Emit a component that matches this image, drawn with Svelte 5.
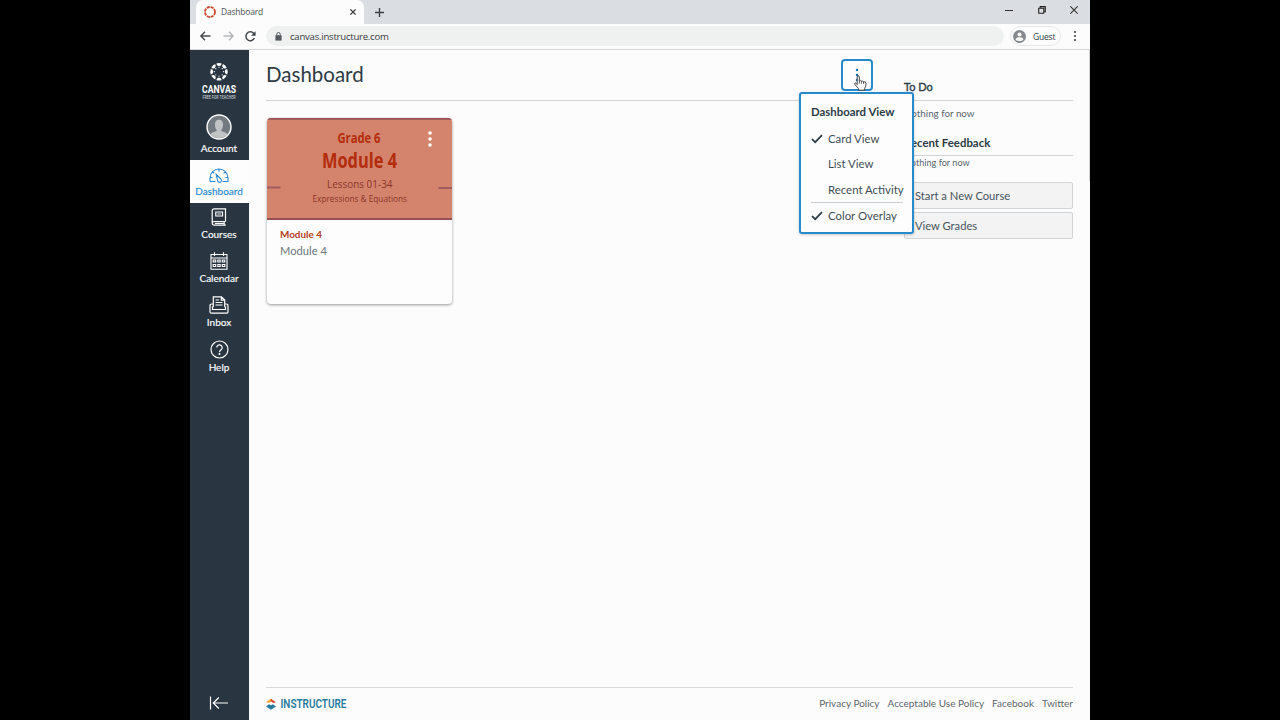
<script>
  const nav = [
    { id: 'account', label: 'Account', height: 50 },
    { id: 'dashboard', label: 'Dashboard', height: 43, active: true },
    { id: 'courses', label: 'Courses', height: 43 },
    { id: 'calendar', label: 'Calendar', height: 44 },
    { id: 'inbox', label: 'Inbox', height: 44 },
    { id: 'help', label: 'Help', height: 45 }
  ];
  const views = [
    { label: 'Card View', checked: true },
    { label: 'List View', checked: false },
    { label: 'Recent Activity', checked: false }
  ];
  const links = ['Privacy Policy', 'Acceptable Use Policy', 'Facebook', 'Twitter'];
  const segments = [0, 45, 90, 135, 180, 225, 270, 315];
</script>

{#snippet check(on)}
  <span class="check">
    {#if on}
      <svg width="12" height="10" viewBox="0 0 12 10"><path d="M1 5.2 4.2 8.2 11 1.2" fill="none" stroke="#2d3b45" stroke-width="1.7" /></svg>
    {/if}
  </span>
{/snippet}

<div class="screen">
  <div class="window">
    <div class="tabs">
      <div class="tab">
        <svg class="fav" width="12" height="12" viewBox="0 0 12 12"><circle cx="6" cy="6" r="5" fill="none" stroke="#c8442f" stroke-width="1.8" stroke-dasharray="3.1 .83" /></svg>
        <span class="tabname">Dashboard</span>
        <svg width="6" height="6" viewBox="0 0 6 6"><path d="M.4.4 5.6 5.6M5.6.4.4 5.6" stroke="#333" stroke-width="1.3" /></svg>
      </div>
      <svg class="plus" width="9" height="9" viewBox="0 0 9 9"><path d="M4.5 0V9M0 4.5H9" stroke="#3c4043" stroke-width="1.4" /></svg>
      <div class="controls">
        <svg width="8" height="9" viewBox="0 0 8 9"><path d="M0 4.500H8" stroke="#333" /></svg>
        <svg width="8" height="8" viewBox="0 0 8 8"><path d="M.7 2.2H5.8V7.3H.7ZM2.2 2V.6H7.3V5.8H6" fill="none" stroke="#222" stroke-width="1.1" /></svg>
        <svg width="8" height="8" viewBox="0 0 8 8"><path d="M.4.4 7.6 7.6M7.6.4.4 7.6" stroke="#333" stroke-width="1.1" /></svg>
      </div>
    </div>
    <div class="toolbar">
      <svg width="11" height="10" viewBox="0 0 11 10"><path d="M10.5 5H1M5 .8.9 5 5 9.2" fill="none" stroke="#44484c" stroke-width="1.4" /></svg>
      <svg width="11" height="10" viewBox="0 0 11 10"><path d="M.5 5H10M6 .8 10.1 5 6 9.2" fill="none" stroke="#b1b4b7" stroke-width="1.3" /></svg>
      <svg width="11" height="11" viewBox="0 0 11 11"><path d="M9.4 7A4.4 4.4 0 1 1 8.6 2.3L9.6 3.5" fill="none" stroke="#44484c" stroke-width="1.5" /><path d="M10.6.2V4.8H6Z" fill="#44484c" /></svg>
      <div class="address">
        <svg width="7" height="9" viewBox="0 0 7 9"><path d="M.4 3.2H6.6V8.6H.4Z" fill="#55595d" /><path d="M1.8 3.5V2.2a1.7 1.7 0 0 1 3.4 0V3.5" fill="none" stroke="#55595d" stroke-width="1" /></svg>
        <span>canvas.instructure.com</span>
      </div>
      <div class="guest">
        <svg width="13" height="13" viewBox="0 0 13 13"><circle cx="6.5" cy="6.5" r="6.5" fill="#85898e" /><circle cx="6.5" cy="4.4" r="2" fill="#fff" /><path d="M2.5 9.5C3.2 6.6 9.8 6.6 10.5 9.5 8.7 11.6 4.3 11.6 2.5 9.5Z" fill="#fff" /></svg>
        <span>Guest</span>
      </div>
      <svg class="kebab" width="4" height="12" viewBox="0 0 4 12" fill="#44484c"><circle cx="2" cy="2" r="1.1" /><circle cx="2" cy="6" r="1.1" /><circle cx="2" cy="10" r="1.1" /></svg>
    </div>

    <div class="page">
      <nav class="side">
        <div class="logo">
          <svg width="36" height="38" viewBox="0 0 36 38" fill="#fff">
            {#each segments as a}
              <g transform="rotate({a} 18 8.7)"><path d="M15.300.5Q18-.5 20.700.5 20.300 3 18 3T15.300.5Z" /><circle cx="18" cy="4.200" r=".6" /></g>
            {/each}
            <text x="1" y="29.600" font-family="Roboto" font-size="11.500" font-weight="700" textLength="34" lengthAdjust="spacingAndGlyphs">CANVAS</text>
            <text x="1.500" y="35.500" font-family="Roboto" font-size="4.700" font-weight="500" textLength="33" lengthAdjust="spacingAndGlyphs" fill="#c3cbd0">FREE FOR TEACHER</text>
          </svg>
        </div>
        {#each nav as item}
          <div class="item" class:active={item.active} style="height: {item.height}px">
            {#if item.id === 'account'}
              <svg width="26" height="26" viewBox="0 0 26 26"><circle cx="13" cy="13" r="12" fill="#737b80" stroke="#fff" stroke-width="1.4" /><path d="M4.5 20.5C6 17.5 11 18 10.8 16 8.5 13.5 7.5 6 13 5.4 18.500 6 17.500 13.500 15.200 16 15 18 20 17.500 21.500 20.500 17.500 25 8.500 25 4.500 20.500Z" fill="#c1c4c5" /></svg>
            {:else if item.id === 'dashboard'}
              <svg width="20" height="15" viewBox="0 0 20 15" fill="none" stroke="#2b87d1" stroke-width="1.1"><path d="M1 13.500V10a9 9 0 0 1 18 0V13.500H13.500M1 13.500H6.500M10 1.200V3.800M3.700 3.800 5.300 5.400M16.300 3.800 14.700 5.400M1 9.500H3.500M16.500 9.500H19" /><path d="M7.200 6.500 11.600 10.700A2 2 0 1 1 8.500 12.300Z" /></svg>
            {:else if item.id === 'courses'}
              <svg width="16" height="18" viewBox="0 0 16 18" fill="none" stroke="#fff" stroke-width="1.2"><path d="M14.500 13.500V.8H3.200Q1.200.8 1.200 2.800V15Q1.200 17.200 3.400 17.200H14.800M14.500 13.500H3.400Q1.200 13.500 1.200 15.300M13.200 13.500V17.200M4.800 4H11.500V8H4.800ZM6.500 6H9.800M3.800 15.400H12.500" /></svg>
            {:else if item.id === 'calendar'}
              <svg width="18" height="18" viewBox="0 0 18 18" fill="none" stroke="#fff" stroke-width="1.1"><path d="M1 2.500H17V17.200H1ZM1 6H17M4.500.2V4M13.500.2V4" /><path d="M3.200 8H5.700V10H3.200ZM7.800 8H10.200V10H7.800ZM12.300 8H14.800V10H12.300ZM3.200 12.500H5.700V14.500H3.200ZM7.800 12.500H10.200V14.500H7.800ZM12.300 12.500H14.800V14.500H12.300Z" /></svg>
            {:else if item.id === 'inbox'}
              <svg width="20" height="18" viewBox="0 0 20 18" fill="none" stroke="#fff" stroke-width="1.2"><path d="M4.300 11V.8H12.500L15.700 4V11M12.300 1V4.200H15.500M6.500 4H10M6.500 6.500H13.500M6.500 9H13.500M4 8H2.800Q1 8 1 10V16Q1 17.200 2.200 17.200H17.800Q19 17.200 19 16V10Q19 8 17.200 8H16M4.300 11H3.500V13.500H16.500V11H15.700" /></svg>
            {:else}
              <svg width="19" height="19" viewBox="0 0 19 19" fill="none" stroke="#fff" stroke-width="1.2"><circle cx="9.500" cy="9.500" r="8.500" /><path d="M6.800 7.600a2.700 2.700 0 1 1 4.600 1.900C10.200 10.500 9.500 10.700 9.500 12.200" /><circle cx="9.500" cy="14" r=".5" fill="#fff" /></svg>
            {/if}
            <span>{item.label}</span>
          </div>
        {/each}
        <svg class="collapse" width="20" height="14" viewBox="0 0 20 14" fill="none" stroke="#fff" stroke-width="1.200"><path d="M1.500.5V13.500M19 7H4.500M9.800 1.500 4.300 7 9.800 12.500" /></svg>
      </nav>

      <div class="body">
        <div class="columns">
          <main>
            <header>
              <h1>Dashboard</h1>
              <div class="options">
                <button aria-label="Dashboard options">
                  <svg width="4" height="16" viewBox="0 0 4 16" fill="#0374b5"><circle cx="2" cy="3" r="1.200" /><circle cx="2" cy="8" r="1.200" /><circle cx="2" cy="13" r="1.200" /></svg>
                </button>
                <div class="menu">
                  <div class="title">Dashboard View</div>
                  {#each views as v}
                    <div class="option">{@render check(v.checked)}<span>{v.label}</span></div>
                  {/each}
                  <div class="rule"></div>
                  <div class="option">{@render check(true)}<span>Color Overlay</span></div>
                </div>
                <svg class="cursor" width="13" height="16" viewBox="0 0 13 16"><path d="M3.200 9.600V2Q3.200.8 4.200.8T5.300 2V5.800Q6.700 4.800 7.400 6.200 8.900 5.400 9.500 6.800 11.900 6.200 12 8.500 12.100 11.500 10.700 13.200V15.200H4.600V13.700L1 9.500Q.3 8 1.500 8 2.300 8.200 3.200 9.600Z" fill="#fff" stroke="#333" stroke-width=".9" /><path d="M5.300 5.800V8.500M7.400 6.200V8.700M9.500 6.800V8.800" stroke="#333" stroke-width=".8" /></svg>
              </div>
            </header>
            <article>
              <div class="cover">
                <svg class="dots" width="6" height="18" viewBox="0 0 6 18" fill="#fff"><circle cx="3" cy="3" r="1.800" /><circle cx="3" cy="9" r="1.800" /><circle cx="3" cy="15" r="1.800" /></svg>
                <svg width="185" height="102" viewBox="0 0 185 102" font-family="Open Sans, sans-serif">
                  <path d="M0 .8H185M0 101H185" stroke="#985056" stroke-width="1.800" />
                  <path d="M0 69.500H13.500M171.500 70H185" stroke="#a15c62" stroke-width="2" />
                  <g fill="#b32c0c" font-weight="700">
                    <text x="70.500" y="25" font-size="14.500" textLength="43" lengthAdjust="spacingAndGlyphs">Grade 6</text>
                    <text x="55" y="50" font-size="21.500" textLength="75" lengthAdjust="spacingAndGlyphs">Module 4</text>
                  </g>
                  <g fill="#8b3528">
                    <text x="60" y="69.700" font-size="10" textLength="65.500" lengthAdjust="spacingAndGlyphs">Lessons 01-34</text>
                    <text x="45.500" y="84" font-size="8.700" textLength="94.500" lengthAdjust="spacingAndGlyphs">Expressions &amp; Equations</text>
                  </g>
                </svg>
              </div>
              <div class="info">
                <div class="name">Module 4</div>
                <div class="code">Module 4</div>
              </div>
            </article>
          </main>
          <aside>
            <h2 class="todo">To Do</h2>
            <p class="first">Nothing for now</p>
            <h2 class="feedback">Recent Feedback</h2>
            <p class="second">Nothing for now</p>
            <div class="btn">Start a New Course</div>
            <div class="btn">View Grades</div>
          </aside>
        </div>
        <footer>
          <svg width="81" height="12" viewBox="0 0 81 12">
            <path d="M0 4.200 4.800.8 6.700 2.200 3.500 4.700Z" fill="#efa52d" /><path d="M4.800.8 10 4.200 7.300 5 5 3.200Z" fill="#d64027" /><path d="M0 8.400 3 6.200 5 7.200 7 6.200 10 8.400 5 11.800Z" fill="#287a9f" />
            <text x="14.500" y="10.400" fill="#287a9f" font-family="Roboto" font-weight="600" font-size="12" textLength="66" lengthAdjust="spacingAndGlyphs">INSTRUCTURE</text>
          </svg>
          <div class="links">{#each links as l}<span>{l}</span>{/each}</div>
        </footer>
      </div>
    </div>
  </div>
</div>

<style>
  :global(body) { margin: 0; background: #000; }
  .screen { width: 1280px; height: 720px; overflow: hidden; background: #000; display: flex; justify-content: center; font-family: Lato, sans-serif; color: #2d3b45; }
  .screen * { box-sizing: border-box; }
  svg { display: block; flex: none; overflow: visible; }
  span, h1, h2 { white-space: nowrap; }
  .window { width: 900px; height: 720px; background: #fcfcfc; display: flex; flex-direction: column; }
  .tabs { height: 24px; background: #dadde2; display: flex; align-items: center; font-family: "Open Sans", sans-serif; }
  .tab { width: 168px; height: 24px; margin-left: 6px; padding: 0 8px; display: flex; align-items: center; background: #fcfcfc; border-radius: 7px 7px 0 0; }
  .tabname { flex: 1; margin-left: 5px; font-size: 8.500px; line-height: 12px; padding-bottom: 1px; letter-spacing: -.2px; color: #4d5156; }
  .plus { margin-left: 11px; }
  .controls { margin-left: auto; margin-right: 12px; display: flex; gap: 24.500px; align-items: center; padding-bottom: 4px; }
  .toolbar { height: 26px; padding: 0 13px 1px 10px; border-bottom: 1px solid #d5d9dc; display: flex; align-items: center; background: #fcfcfc; font-family: "Open Sans", sans-serif; }
  .toolbar > svg + svg { margin-left: 11.500px; }
  .address { width: 738px; height: 20px; margin-left: 10px; padding-left: 9px; border-radius: 10px; background: #eff1f1; display: flex; align-items: center; gap: 8px; font-size: 9.600px; letter-spacing: -.25px; color: #3c4043; }
  .guest { width: 51px; height: 20px; margin-left: 6px; padding-left: 2px; border: 1px solid #e7e9eb; border-radius: 10px; display: flex; align-items: center; gap: 7px; font-size: 8.500px; letter-spacing: -.2px; }
  .toolbar .kebab { margin-left: auto; }
  .page { flex: 1; display: flex; min-height: 0; }
  .side { flex: none; width: 59px; background: #293641; display: flex; flex-direction: column; align-items: stretch; }
  .logo { height: 60px; padding: 13px 1px 0 0; display: flex; justify-content: center; }
  .item { display: flex; flex-direction: column; align-items: center; justify-content: flex-end; gap: 1px; padding: 0 1px 5px 0; color: #fff; font-size: 10px; line-height: 14px; }
  .item span { -webkit-text-stroke: .15px currentColor; }
  .active { background: #fdfdfd; color: #2b87d1; }
  .collapse { margin: auto 20px 10px 19px; }
  .body { flex: 1; padding: 0 17px; display: flex; flex-direction: column; background: linear-gradient(#d2d5d8, #d2d5d8) right top / 1px 131px no-repeat; }
  .columns { flex: 1; display: flex; }
  main { width: 638px; }
  header { height: 51px; display: flex; justify-content: space-between; border-bottom: 1px solid #cfd3d6; }
  h1 { margin: 0; font-size: 20.500px; line-height: 49px; font-weight: 400; }
  .options { position: relative; margin: 9px 31px 0 0; height: 32px; }
  button { width: 32px; height: 32px; padding: 0; display: grid; place-items: center; background: #fdfdfd; border: 2px solid #268acb; border-radius: 4px; }
  .menu { position: absolute; z-index: 2; top: 33px; left: -42px; width: 115px; height: 142px; padding: 6px 9px 6px 10px; background: #fdfdfd; border: 2px solid #268acb; border-radius: 3px; box-shadow: 0 1px 3px #0003; }
  .title { height: 26px; line-height: 24px; font-size: 11.400px; font-weight: 700; white-space: nowrap; }
  .option { height: 25.300px; display: flex; align-items: center; font-size: 11.400px; white-space: nowrap; color: #414e58; }
  .check { flex: none; width: 17px; }
  .rule { height: 1px; background: #c7cdd1; }
  .cursor { position: absolute; z-index: 3; left: 13px; top: 16px; }
  article { width: 185px; height: 186px; margin: 17px 0 0 1px; border-radius: 4px; overflow: hidden; background: #fdfdfd; box-shadow: 0 1px 3px #0006; }
  .cover { position: relative; height: 102px; background: #d4846d; }
  .dots { position: absolute; left: 160px; top: 12px; }
  .info { padding: 6px 13px; line-height: 16px; }
  .name { font-size: 9.900px; font-weight: 700; color: #b3401f; }
  .code { font-size: 11.200px; line-height: 17px; color: #6c757c; }
  aside { width: 169px; padding-top: 28px; }
  h2 { margin: 0; font-size: 11.400px; font-weight: 700; border-bottom: 1px solid #cfd3d6; }
  .todo { height: 23px; line-height: 18px; font-size: 11px; font-weight: 400; -webkit-text-stroke: .35px #2d3b45; }
  p { margin: 0; color: #596670; }
  .first { height: 32px; line-height: 25px; font-size: 9.800px; }
  .feedback { height: 23px; line-height: 20px; }
  .second { height: 26px; line-height: 14px; font-size: 9.150px; }
  .btn { height: 27px; margin-bottom: 3px; padding-left: 10px; border: 1px solid #d1d4d6; border-radius: 2px; background: #f3f3f3; font-size: 11.200px; line-height: 26px; color: #46535d; }
  footer { height: 33px; padding-bottom: 1px; border-top: 1px solid #d8dbdd; display: flex; align-items: center; justify-content: space-between; }
  .links { display: flex; gap: 8px; padding-bottom: 1px; font-size: 10px; color: #5d666d; }
</style>
